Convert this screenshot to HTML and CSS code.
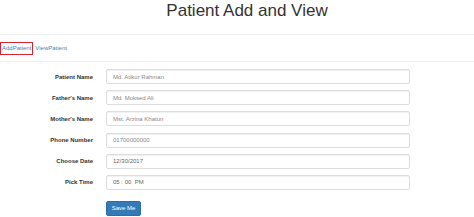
FILE: index.html
```html
<!DOCTYPE html>
<html lang="en">
<head>
  <meta charset="UTF-8">
  <meta name="viewport" content="width=device-width, initial-scale=1.0">
  <title>Patient Add and View</title>
  <link rel="stylesheet" href="styles.css">
</head>
<body>
  <h1 class="title">Patient Add and View</h1>

  <nav class="navbar">
    <a href="#" class="nav-link active">AddPatient</a>
    <a href="#" class="nav-link">ViewPatient</a>
  </nav>

  <form class="patient-form">
    <div class="form-row">
      <label for="pname">Patient Name</label>
      <input id="pname" type="text" placeholder="Md. Atikur Rahman">
    </div>
    <div class="form-row">
      <label for="fname">Father's Name</label>
      <input id="fname" type="text" placeholder="Md. Moksed Ali">
    </div>
    <div class="form-row">
      <label for="mname">Mother's Name</label>
      <input id="mname" type="text" placeholder="Mst. Arzina Khatun">
    </div>
    <div class="form-row">
      <label for="phone">Phone Number</label>
      <input id="phone" type="text" placeholder="01700000000">
    </div>
    <div class="form-row">
      <label for="date">Choose Date</label>
      <input id="date" type="text" value="12/30/2017">
    </div>
    <div class="form-row">
      <label for="time">Pick Time</label>
      <input id="time" type="text" value="05 : 00  PM">
    </div>
    <div class="form-row">
      <span></span>
      <div><button type="button" class="btn-save">Save Me</button></div>
    </div>
  </form>
</body>
</html>
```

FILE: styles.css
```css
* {
  box-sizing: border-box;
  margin: 0;
  padding: 0;
}

body {
  font-family: 'Liberation Sans', Arial, sans-serif;
  color: #333;
  background: #fff;
}

.title {
  font-size: 17px;
  font-weight: 400;
  text-align: center;
  padding-left: 20px;
  line-height: 20px;
  padding-top: 1px;
  height: 34px;
}

.navbar {
  display: flex;
  align-items: center;
  height: 28px;
  border-top: 1px solid #eee;
  border-bottom: 1px solid #eee;
  background: #fff;
}

.nav-link {
  font-size: 6px;
  color: #4a7fb8;
  text-decoration: none;
  line-height: 11px;
  border: 1px solid transparent;
  padding: 0 1px 0 0;
}

.nav-link.active {
  border: 1px solid #d9232e;
  padding: 0 1px 0 1px;
  margin-right: 1px;
}

.patient-form {
  display: flex;
  flex-direction: column;
  gap: 6.2px;
  padding-top: 7px;
  width: 410px;
}

.form-row {
  display: grid;
  grid-template-columns: 93px 1fr;
  column-gap: 13px;
  align-items: center;
}

.form-row label {
  font-size: 6px;
  font-weight: 700;
  text-align: right;
  color: #333;
}

.form-row input {
  height: 15px;
  width: 100%;
  border: 1px solid #ddd;
  border-radius: 2px;
  box-shadow: inset 0 1px 1px rgba(0, 0, 0, 0.06);
  padding: 0 6px;
  font-family: 'Liberation Sans', Arial, sans-serif;
  font-size: 6px;
  color: #666;
  outline: none;
}

.form-row input::placeholder {
  color: #888;
}

.btn-save {
  margin-top: 1px;
  height: 15px;
  width: 35px;
  border: 1px solid #2e6da4;
  border-radius: 2px;
  background: #337ab7;
  color: #fff;
  font-family: 'Liberation Sans', Arial, sans-serif;
  font-size: 6px;
}
```
